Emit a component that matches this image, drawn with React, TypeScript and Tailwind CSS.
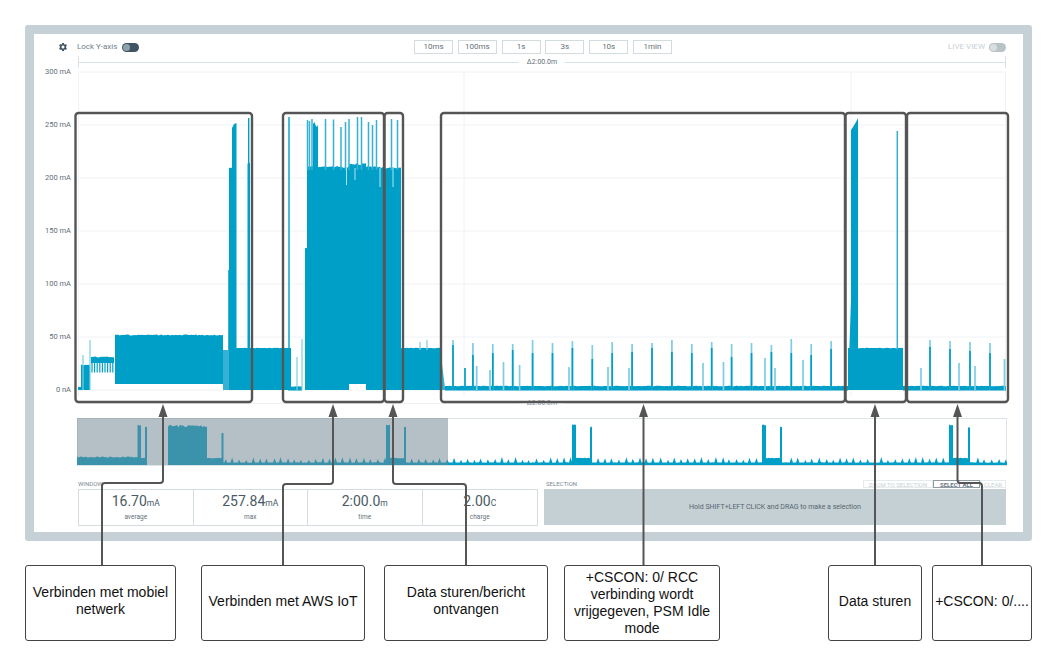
import React from "react";
import { MdSettings } from "react-icons/md";

const BLUE = "#009fc7";
const MID = "#35b1d3";
const LIGHT = "#7fcde3";

function makeRandom(seed: number) {
  let s = seed;
  return () => {
    s = (s * 16807) % 2147483647;
    return s / 2147483647;
  };
}

// jagged top edge, flat bottom edge
function band(rand: () => number, x0: number, x1: number, top: number, bottom: number, jitter = 0.8) {
  let d = `M${x0} ${bottom}`;
  for (let x = x0; x <= x1; x += 1.5) {
    d += `L${x.toFixed(1)} ${(top + (rand() - 0.5) * jitter).toFixed(1)}`;
  }
  return d + `L${x1} ${top}L${x1} ${bottom}Z`;
}

function spikes(list: number[][], bottom = 390) {
  return list.map(([x, top, b]) => `M${x} ${top}V${b ?? bottom}`).join("");
}

const idleOffsets = [340, 343, 344, 344, 340, 343, 341, 345, 342, 344, 343, 340, 344, 342, 344, 343, 345, 339, 344, 341];
const idleLightTops: number[][] = [];
const idleDarkTops: number[][] = [];
idleOffsets.forEach((top, i) => {
  const x = 453 + i * 19.9;
  idleLightTops.push([x, top]);
  idleDarkTops.push([x, top + 5 + (i * 7) % 10]);
});
const tail = [930, 950, 970, 990];
tail.forEach((x, i) => {
  idleLightTops.push([x, 340 + i]);
  idleDarkTops.push([x, 347 + i * 2]);
});
const idleSmall = [
  [476.7, 366], [490, 370], [503.5, 362], [519.6, 365], [569, 367], [608, 367], [629, 368],
  [703, 363], [723.5, 362], [765, 358], [775, 368], [803, 360], [921, 368], [959, 363], [975, 366], [1004.5, 359],
];

const burstTops = [
  [307.5, 120], [309.5, 121], [312, 119], [325.5, 119], [333.5, 119.5], [341, 127],
  [345.5, 122], [349, 119], [357.5, 117], [361.5, 117], [368.5, 122], [372.5, 125], [376.5, 120], [391.5, 119], [397.5, 120],
];

function MainTrace() {
  const r = makeRandom(42);
  const dark = [
    `M78 387H82V390H78Z`,
    band(r, 81, 90, 365, 390, 1),
    band(r, 91, 114, 357, 363, 1),
    band(r, 115, 223, 335, 384, 1),
    band(r, 236, 291, 348, 390, 0.5),
    band(r, 229, 232, 168, 390, 1),
    `M232 390V128L234 124L236.5 123V390Z`,
    band(r, 247.5, 250, 163, 390, 1),
    band(r, 305, 308, 248, 390, 1),
    band(r, 307, 349, 167, 390, 2),
    band(r, 313, 318, 124, 170, 7),
    band(r, 349, 366, 164, 384, 2),
    band(r, 366, 384, 167, 390, 2),
    band(r, 384, 401, 168, 390, 2),
    band(r, 401, 440, 348, 390, 0.5),
    band(r, 848, 903, 348, 390, 0.5),
    `M851 350V130L853 127L856 122L858 118V350Z`,
    `M848 390L851 300V390Z`,
    band(r, 288, 302, 386.5, 390.5, 0.5),
    band(r, 445, 848, 386, 390.5, 0.6),
    band(r, 903, 1006, 386, 390.5, 0.6),
  ].join("");
  const soft = `M440 348L445 388V390H440Z M223 350H228V390H223Z M228 270H229.5V390H228Z`;
  const comb: number[][] = [];
  for (let x = 92; x < 113; x += 2.6) comb.push([x, 362, 372.5]);
  return (
    <g>
      <path d={soft} fill={MID} />
      <path d={dark} fill={BLUE} />
      <rect x="349" y="384" width="17" height="6.5" fill="#ffffff" />
      <path d={spikes(comb)} stroke={BLUE} strokeWidth="1.2" fill="none" />
      <path d={spikes(idleLightTops) + spikes(idleSmall)} stroke={LIGHT} strokeWidth="1.7" fill="none" />
      <path d={spikes(idleDarkTops) + spikes([[465, 368]])} stroke={BLUE} strokeWidth="1.7" fill="none" />
      <path d={spikes([[289, 117, 390], [248.7, 118, 165]])} stroke={BLUE} strokeWidth="1.4" fill="none" />
      <path d={spikes([[897.3, 131, 350]]) + spikes(burstTops, 170)} stroke={MID} strokeWidth="1.5" fill="none" />
      <path d={spikes([[83, 355], [90, 340], [297, 357], [302, 339], [420, 342, 350], [427, 340, 350]])} stroke={LIGHT} strokeWidth="1.2" fill="none" />
      <path d={spikes([[346.5, 168, 185], [355, 168, 180], [380, 168, 187], [393, 168, 187]])} stroke="#b5e2ef" strokeWidth="1" fill="none" />
    </g>
  );
}

function MiniTrace() {
  const r = makeRandom(7);
  let d = band(r, 77, 138, 457, 465, 1.5);
  d += band(r, 168, 207, 426, 465, 3);
  d += band(r, 207, 222, 458, 465, 0.8);
  const towers = [[137.5, 141, 145, 147], [386, 390, 404, 406], [572, 576, 590, 592], [762, 766, 780, 782], [949, 953, 968, 970]];
  for (const [a, b, c, e] of towers) {
    d += band(r, a, b, 425, 465, 1);
    d += band(r, b, c, 458, 465, 0.6);
    d += band(r, c, e, 427, 465, 1);
  }
  d += band(r, 222, 1006, 462.5, 465, 0.4);
  // small triangular blips along the base
  for (let x = 225; x < 1005; x += 6.9) {
    if (towers.some(([a, , , e]) => x > a - 2 && x < e + 2)) continue;
    const cx = x + r() * 1.5;
    d += `M${(cx - 2.4).toFixed(1)} 465L${cx.toFixed(1)} ${(457 + r() * 3).toFixed(1)}L${(cx + 2.4).toFixed(1)} 465Z`;
  }
  return (
    <g>
      <path d={d} fill={BLUE} />
      <path d={spikes([[222.5, 433, 465]])} stroke={BLUE} strokeWidth="2" fill="none" />
    </g>
  );
}

const ranges = ["10ms", "100ms", "1s", "3s", "10s", "1min"];
const yLabels = ["300 mA", "250 mA", "200 mA", "150 mA", "100 mA", "50 mA", "0 nA"];
const stats = [
  { value: "16.70", unit: "mA", label: "average" },
  { value: "257.84", unit: "mA", label: "max" },
  { value: "2:00.0", unit: "m", label: "time" },
  { value: "2.00", unit: "C", label: "charge" },
];
const notes = [
  { text: "Verbinden met mobiel netwerk", cls: "w-[151px] px-1 pb-[4px]" },
  { text: "Verbinden met AWS IoT", cls: "w-[164px] ml-[25px] px-1 pb-[4px]" },
  { text: "Data sturen/bericht ontvangen", cls: "w-[164px] ml-[19px] px-4 pb-[4px]" },
  { text: "+CSCON: 0/ RCC verbinding wordt vrijgegeven, PSM Idle mode", cls: "w-[156px] ml-[16px] px-1" },
  { text: "Data sturen", cls: "w-[94px] ml-[108px] px-1 pb-[4px]" },
  { text: "+CSCON: 0/....", cls: "w-[100px] ml-[10px] pb-[4px]" },
];
const regions = [
  [75.5, 252], [283, 384], [384.5, 403], [441, 845], [845.5, 906], [907, 1008],
];
const arrows = [
  "M163 410V480Q163 483 160 483H105Q102 483 102 486V565",
  "M333 410V481Q333 484 330 484H286Q283 484 283 487V565",
  "M393 410V481Q393 484 396 484H463Q466 484 466 487V565",
  "M643.5 410V565",
  "M875 410V565",
  "M957.5 410V480Q957.5 483 960.5 483H979Q982 483 982 486V565",
];

export default function App() {
  return (
    <div className="relative w-[1058px] h-[667px] overflow-hidden bg-white pt-[25px] pl-[25px] font-[Roboto,sans-serif]">
      <div className="w-[1007px] h-[516px] border-[9px] border-[#c5d1d6] rounded-[3px] bg-white">
        {/* toolbar */}
        <div className="flex items-center h-[22px] pt-[4px] pl-[24px] pr-[17px]">
          <div className="flex items-center w-[356px]">
            <MdSettings className="text-[#3f5563]" size={10} />
            <span className="ml-[9px] text-[8px] text-[#71808a]">Lock Y-axis</span>
            <span className="ml-[5px] flex items-center w-[17px] h-[9px] rounded-full bg-[#3f5563] pl-[1px]">
              <span className="w-[7px] h-[7px] rounded-full bg-[#8fa1ab]" />
            </span>
          </div>
          <div className="flex gap-[4.8px]">
            {ranges.map((r) => (
              <span key={r} className="flex items-center justify-center w-[39px] h-[14px] border border-[#d2dcdf] text-[8px] text-[#5f6f78]">
                {r}
              </span>
            ))}
          </div>
          <div className="ml-auto flex items-center">
            <span className="text-[8px] text-[#c8cfd3]">LIVE VIEW</span>
            <span className="ml-[4px] flex items-center w-[17px] h-[9px] rounded-full bg-[#b8c2c7] pl-[1px]">
              <span className="w-[7px] h-[7px] rounded-full bg-[#d8dee1]" />
            </span>
          </div>
        </div>

        {/* duration */}
        <div className="flex pl-[44px] pr-[17px]">
          <div className="flex items-center flex-1 h-[12px] border-x border-[#d9e3e6] gap-[8px]">
            <span className="flex-1 h-px bg-[#d9e3e6]" />
            <span className="text-[7px] text-[#5f6f78]">Δ2:00.0m</span>
            <span className="flex-1 h-px bg-[#d9e3e6]" />
          </div>
        </div>

        {/* plot */}
        <div className="flex h-[330px]">
          <div className="flex flex-col items-end w-[37px] gap-[45px] mr-[7px]">
            {yLabels.map((l) => (
              <span key={l} className="h-[8px] leading-[8px] text-[7.5px] text-[#5f6e76] whitespace-nowrap">
                {l}
              </span>
            ))}
          </div>
          <svg width="930" height="330" viewBox="78 68 930 330" className="blur-[0.4px]">
            <g stroke="#f0f2f4" strokeWidth="1" fill="none">
              {[72, 125, 178, 231, 284, 337, 390].map((y) => (
                <path key={y} d={`M78 ${y}H1006`} />
              ))}
              {[78.5, 464, 851, 1005.5].map((x) => (
                <path key={x} d={`M${x} 72V396`} />
              ))}
            </g>
            <MainTrace />
          </svg>
        </div>

        {/* lower time axis */}
        <div className="flex pl-[44px] pr-[17px]">
          <div className="flex items-center justify-center flex-1 h-[11px] gap-[8px]">
            <span className="flex-1 h-px bg-[#eef2f3]" />
            <span className="text-[7px] text-[#8a9aa3]">Δ2:00.0m</span>
            <span className="flex-1 h-px bg-[#eef2f3]" />
          </div>
        </div>

        {/* overview */}
        <div className="pl-[43px] mt-[9px]">
          <svg width="930" height="48" viewBox="77 418 930 48" className="blur-[0.4px]">
            <rect x="77.5" y="418.5" width="929" height="47" fill="#ffffff" stroke="#dbe3e6" />
            <MiniTrace />
            <rect x="77" y="418" width="371" height="47" fill="#708691" fillOpacity="0.52" />
          </svg>
        </div>

        {/* stats and selection */}
        <div className="flex gap-[6px] pl-[44px] mt-[14px]">
          <div className="w-[460px]">
            <div className="h-[9px] leading-[8px] text-[6px] text-[#7b8a93]">WINDOW</div>
            <div className="grid grid-cols-4 h-[37px] border border-[#d3dcdf] divide-x divide-[#d3dcdf]">
              {stats.map((s) => (
                <div key={s.label} className="flex flex-col items-center justify-center text-[#4a5a64]">
                  <span className="text-[14px] leading-[17px]">
                    {s.value}
                    <span className="text-[8.5px]">{s.unit}</span>
                  </span>
                  <span className="text-[6.5px] leading-[10px] text-[#5f6f78]">{s.label}</span>
                </div>
              ))}
            </div>
          </div>
          <div className="w-[462px]">
            <div className="flex items-start justify-between h-[9px]">
              <span className="ml-[2px] text-[6px] leading-[8px] text-[#7b8a93]">SELECTION</span>
              <div className="flex h-[8px] text-[6px] leading-[7px] text-[#c8d0d4]">
                <span className="flex items-center justify-center w-[70px] border border-[#e6ebed]">ZOOM TO SELECTION</span>
                <span className="flex items-center justify-center w-[47px] border border-[#8f9ca3] font-bold text-[#6b7a83]">SELECT ALL</span>
                <span className="flex items-center justify-center w-[26px] border border-[#e6ebed]">CLEAR</span>
              </div>
            </div>
            <div className="flex items-center justify-center h-[36px] bg-[#c5d0d5] text-[7px] text-[#55656e]">
              Hold SHIFT+LEFT CLICK and DRAG to make a selection
            </div>
          </div>
        </div>
      </div>

      {/* callouts */}
      <div className="flex mt-[24px] h-[76px] font-['Liberation_Sans',Arial,sans-serif] text-[14px] leading-[17px] text-[#111]">
        {notes.map((n) => (
          <div key={n.text} className={`flex items-center justify-center text-center border-[1.5px] border-[#444] rounded-[3px] ${n.cls}`}>
            {n.text}
          </div>
        ))}
      </div>

      {/* annotation overlay */}
      <svg width="1058" height="667" viewBox="0 0 1058 667" className="absolute left-0 top-0 pointer-events-none">
        {regions.map(([a, b]) => (
          <rect key={a} x={a} y="113" width={b - a} height="289" rx="3" fill="none" stroke="#555" strokeWidth="2.4" />
        ))}
        {arrows.map((d) => (
          <path key={d} d={d} fill="none" stroke="#555" strokeWidth="2" />
        ))}
        {[163, 333, 393, 643.5, 875, 957.5].map((x) => (
          <path key={x} d={`M${x} 404L${x + 4.5} 417H${x - 4.5}Z`} fill="#555" />
        ))}
      </svg>
    </div>
  );
}
